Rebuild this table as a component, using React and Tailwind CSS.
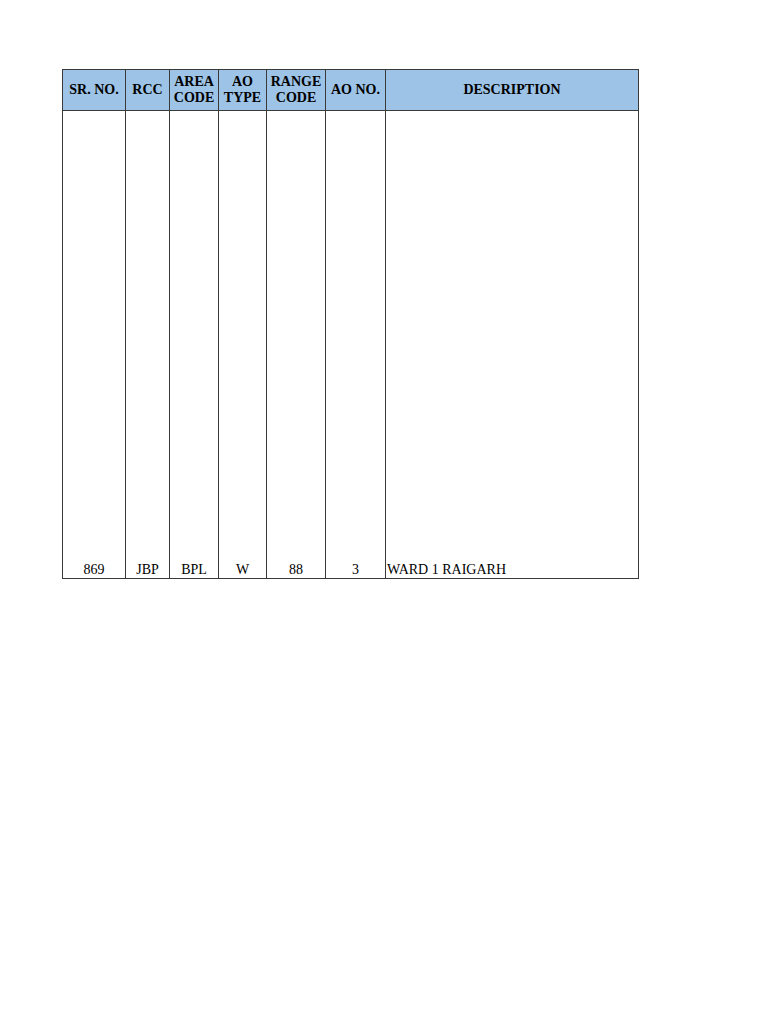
const columns = [
  { label: ["SR. NO."], width: "w-[63px]", value: "869" },
  { label: ["RCC"], width: "w-[44px]", value: "JBP" },
  { label: ["AREA", "CODE"], width: "w-[49px]", value: "BPL" },
  { label: ["AO", "TYPE"], width: "w-[48px]", value: "W" },
  { label: ["RANGE", "CODE"], width: "w-[59px]", value: "88" },
  { label: ["AO NO."], width: "w-[60px]", value: "3" },
  { label: ["DESCRIPTION"], width: "w-[253px]", value: "WARD 1 RAIGARH", left: true },
];

export default function App() {
  return (
    <div className="min-h-[1024px] bg-white pt-[69px] pl-[62px] font-['Liberation_Serif',serif] text-black">
      <table className="table-fixed border-collapse w-[577px]">
        <thead>
          <tr className="h-[41px] bg-[#9dc3e6]">
            {columns.map((c) => (
              <th
                key={c.label.join(" ")}
                className={`${c.width} border border-[#3a3a3a] p-0 text-center align-middle text-[14px] font-bold leading-[16px]`}
              >
                {c.label.map((l) => (
                  <div key={l}>{l}</div>
                ))}
              </th>
            ))}
          </tr>
        </thead>
        <tbody>
          <tr className="h-[468px]">
            {columns.map((c) => (
              <td
                key={c.value}
                className={`border border-[#3a3a3a] p-0 align-bottom text-[14px] leading-[16px] ${c.left ? "text-left pl-[1px]" : "text-center"}`}
              >
                {c.value}
              </td>
            ))}
          </tr>
        </tbody>
      </table>
    </div>
  );
}
